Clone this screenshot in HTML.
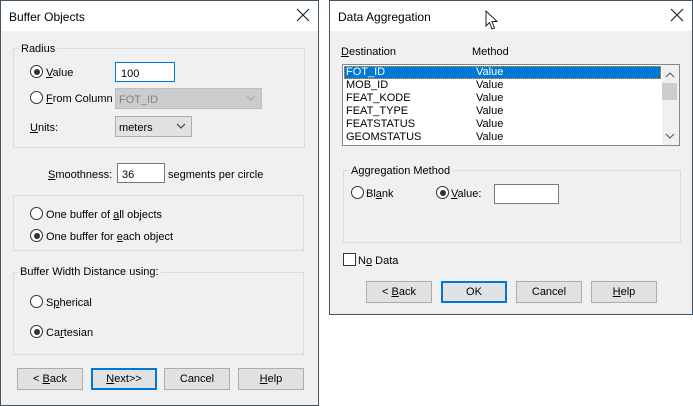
<!DOCTYPE html>
<html><head><meta charset="utf-8"><style>
*{box-sizing:border-box;margin:0;padding:0}
body{width:693px;height:406px;background:#fff;position:relative;overflow:hidden;font-family:"Liberation Sans",sans-serif;font-size:11px;color:#000}
.a{position:absolute;white-space:nowrap}
.dlg{position:absolute;background:#f0f0f0;box-shadow:inset 0 0 0 1px #3f5468}
.tb{position:absolute;left:1px;top:1px;right:1px;height:30px;background:#fff}
.t{font-size:12px}
.grp{position:absolute;border:1px solid #dcdcdc}
.leg{position:absolute;background:#f0f0f0;padding:0 2px;line-height:14px}
.rad{position:absolute;width:13px;height:13px;border:1px solid #333;border-radius:50%;background:#fff}
.rad.on::after{content:"";position:absolute;left:2.5px;top:2.5px;width:6px;height:6px;border-radius:50%;background:#333}
.btn{position:absolute;height:22px;background:#e1e1e1;border:1px solid #adadad;text-align:center;line-height:21px}
.btn.d{border:2px solid #0078d7;line-height:19px}
.in{position:absolute;background:#fff;border:1px solid #7a7a7a}
u{text-decoration:underline}
.lt{line-height:14px;margin-top:1px}
</style></head><body>

<div class="dlg" style="left:0;top:0;width:319px;height:406px">
 <div class="tb"></div>
 <div class="a t lt" style="left:9px;top:9px">Buffer Objects</div>
 <svg class="a" style="left:296px;top:8px" width="14" height="14"><path d="M1 1L13 13M13 1L1 13" stroke="#222" stroke-width="1.2"/></svg>

 <div class="grp" style="left:13px;top:48px;width:292px;height:100px"></div>
 <div class="leg" style="left:19px;top:42px">Radius</div>
 <div class="rad on" style="left:30px;top:65px"></div>
 <div class="a lt" style="left:46px;top:65px"><u>V</u>alue</div>
 <div class="in" style="left:115px;top:62px;width:60px;height:20px;border-color:#0078d7"></div>
 <div class="a lt" style="left:121px;top:66px">100</div>
 <div class="rad" style="left:30px;top:91px"></div>
 <div class="a lt" style="left:46px;top:91px"><u>F</u>rom Column</div>
 <div class="a" style="left:115px;top:88px;width:147px;height:21px;background:#ccc;border:1px solid #bfbfbf"></div>
 <div class="a lt" style="left:119px;top:92px;color:#838383">FOT_ID</div>
 <svg class="a" style="left:246px;top:95px" width="10" height="6"><path d="M1 1L5 5L9 1" stroke="#aaa" fill="none"/></svg>
 <div class="a lt" style="left:30px;top:120px"><u>U</u>nits:</div>
 <div class="a" style="left:115px;top:116px;width:77px;height:21px;background:#e1e1e1;border:1px solid #adadad"></div>
 <div class="a lt" style="left:119px;top:120px">meters</div>
 <svg class="a" style="left:176px;top:123px" width="10" height="6"><path d="M1 1L5 5L9 1" stroke="#333" fill="none"/></svg>

 <div class="a lt" style="left:48px;top:167px"><u>S</u>moothness:</div>
 <div class="in" style="left:117px;top:163px;width:48px;height:20px"></div>
 <div class="a lt" style="left:122px;top:167px">36</div>
 <div class="a lt" style="left:168px;top:167px">segments per circle</div>

 <div class="grp" style="left:13px;top:195px;width:291px;height:56px"></div>
 <div class="rad" style="left:30px;top:207px"></div>
 <div class="a lt" style="left:46px;top:207px">One buffer of <u>a</u>ll objects</div>
 <div class="rad on" style="left:30px;top:229px"></div>
 <div class="a lt" style="left:46px;top:229px">One buffer for <u>e</u>ach object</div>

 <div class="grp" style="left:13px;top:272px;width:291px;height:83px"></div>
 <div class="leg" style="left:18px;top:265px">Buffer Width Distance using:</div>
 <div class="rad" style="left:30px;top:295px"></div>
 <div class="a lt" style="left:46px;top:295px">S<u>p</u>herical</div>
 <div class="rad on" style="left:30px;top:325px"></div>
 <div class="a lt" style="left:46px;top:325px">Ca<u>r</u>tesian</div>

 <div class="btn" style="left:17px;top:368px;width:66px">&lt; <u>B</u>ack</div>
 <div class="btn d" style="left:91px;top:368px;width:66px"><u>N</u>ext&gt;&gt;</div>
 <div class="btn" style="left:164px;top:368px;width:66px">Cancel</div>
 <div class="btn" style="left:238px;top:368px;width:66px"><u>H</u>elp</div>
</div>

<div class="dlg" style="left:329px;top:0;width:364px;height:315px">
 <div class="tb"></div>
 <div class="a t lt" style="left:9px;top:9px">Data Aggregation</div>
 <svg class="a" style="left:341px;top:8px" width="14" height="14"><path d="M1 1L13 13M13 1L1 13" stroke="#222" stroke-width="1.2"/></svg>
 <svg class="a" style="left:156px;top:10px" width="14" height="22"><path d="M1 1L1 16L4.5 12.5L7 19L9.5 18L7 11.5L12 11.5Z" fill="#fff" stroke="#222"/></svg>

 <div class="a lt" style="left:12px;top:44px"><u>D</u>estination</div>
 <div class="a lt" style="left:143px;top:44px">Method</div>
 <div class="a" style="left:13px;top:64px;width:338px;height:82px;background:#fff;border:1px solid #828790"></div>
 <div class="a" style="left:15px;top:66px;width:317px;height:13px;background:#0078d7;outline:1px dotted #f90;outline-offset:-1px"></div>
 <div class="a" style="left:17px;top:66px;line-height:13px;color:#fff">FOT_ID</div>
 <div class="a" style="left:147px;top:66px;line-height:13px;color:#fff">Value</div>
 <div class="a" style="left:17px;top:79px;line-height:13px">MOB_ID<br>FEAT_KODE<br>FEAT_TYPE<br>FEATSTATUS<br>GEOMSTATUS</div>
 <div class="a" style="left:147px;top:79px;line-height:13px">Value<br>Value<br>Value<br>Value<br>Value</div>
 <div class="a" style="left:333px;top:65px;width:17px;height:80px;background:#f0f0f0"></div>
 <div class="a" style="left:333px;top:83px;width:15px;height:17px;background:#cdcdcd"></div>
 <svg class="a" style="left:336px;top:72px" width="10" height="6"><path d="M1 5L5 1L9 5" stroke="#555" fill="none"/></svg>
 <svg class="a" style="left:336px;top:133px" width="10" height="6"><path d="M1 1L5 5L9 1" stroke="#555" fill="none"/></svg>

 <div class="grp" style="left:14px;top:170px;width:338px;height:73px"></div>
 <div class="leg" style="left:20px;top:164px">Aggregation Method</div>
 <div class="rad" style="left:22px;top:186px"></div>
 <div class="a lt" style="left:37px;top:186px">Bl<u>a</u>nk</div>
 <div class="rad on" style="left:107px;top:186px"></div>
 <div class="a lt" style="left:122px;top:186px"><u>V</u>alue:</div>
 <div class="in" style="left:165px;top:184px;width:65px;height:20px"></div>

 <div class="a" style="left:14px;top:253px;width:13px;height:13px;background:#fff;border:1px solid #333"></div>
 <div class="a lt" style="left:29px;top:253px">N<u>o</u> Data</div>

 <div class="btn" style="left:37px;top:281px;width:66px">&lt; <u>B</u>ack</div>
 <div class="btn d" style="left:112px;top:281px;width:66px">OK</div>
 <div class="btn" style="left:187px;top:281px;width:66px">Cancel</div>
 <div class="btn" style="left:262px;top:281px;width:66px"><u>H</u>elp</div>
</div>
</body></html>
